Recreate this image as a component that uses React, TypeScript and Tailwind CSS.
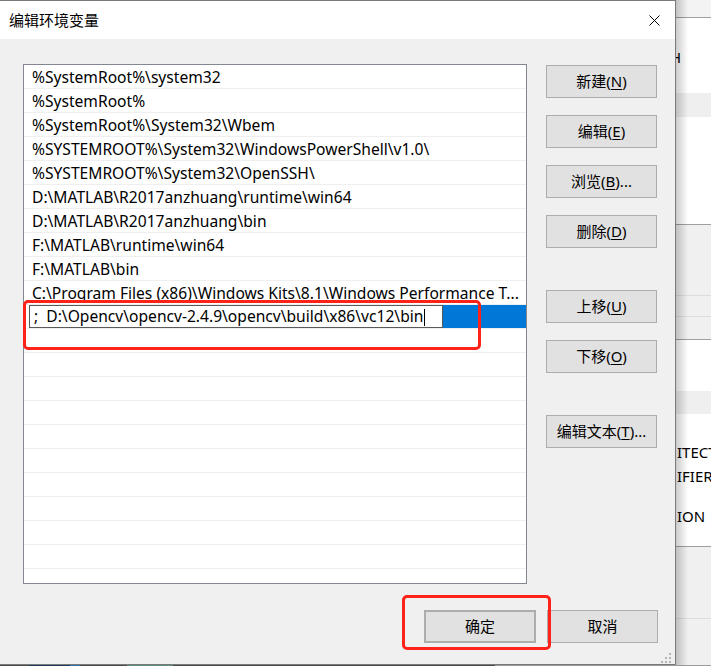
import { ReactNode } from "react";

const font = "font-['Noto_Sans','Noto_Sans_CJK_SC',sans-serif]";

const paths = [
  "%SystemRoot%\\system32",
  "%SystemRoot%",
  "%SystemRoot%\\System32\\Wbem",
  "%SYSTEMROOT%\\System32\\WindowsPowerShell\\v1.0\\",
  "%SYSTEMROOT%\\System32\\OpenSSH\\",
  "D:\\MATLAB\\R2017anzhuang\\runtime\\win64",
  "D:\\MATLAB\\R2017anzhuang\\bin",
  "F:\\MATLAB\\runtime\\win64",
  "F:\\MATLAB\\bin",
  "C:\\Program Files (x86)\\Windows Kits\\8.1\\Windows Performance T...",
];

const editValue = ";  D:\\Opencv\\opencv-2.4.9\\opencv\\build\\x86\\vc12\\bin";

function WinButton({ children, className = "" }: { children: ReactNode; className?: string }) {
  return (
    <div
      className={`flex h-[33px] items-center justify-center border border-[#adadad] bg-[#e1e1e1] text-[15px] text-black ${className}`}
    >
      {children}
    </div>
  );
}

function Key({ k }: { k: string }) {
  return <span className="underline underline-offset-2">{k}</span>;
}

export default function App() {
  const emptyRows = Array.from({ length: 12 });

  return (
    <div className={`relative flex h-[666px] w-[711px] flex-col overflow-hidden bg-[#f0f0f0] ${font}`}>
      <div className="flex h-[665px]">
        {/* Dialog */}
        <div className="relative flex h-[665px] w-[676px] flex-col border-b border-r border-t border-[#7a7a7a] bg-[#f0f0f0]">
          {/* Title bar */}
          <div className="flex h-[38px] items-center justify-between bg-white pl-[9px]">
            <span className="text-[15px] text-black">编辑环境变量</span>
            <svg width="11" height="11" viewBox="0 0 11 11" className="mr-[15px]">
              <path d="M0.5 0.5 L10.5 10.5 M10.5 0.5 L0.5 10.5" stroke="#000" strokeWidth="1" />
            </svg>
          </div>

          {/* Body */}
          <div className="flex flex-1 flex-col pl-[23px] pt-[25px]">
            <div className="flex items-start">
              <div className="h-[520px] w-[504px] overflow-hidden border border-[#828790] bg-white">
                {paths.map((p) => (
                  <div
                    key={p}
                    className="flex h-[24px] items-center overflow-hidden whitespace-nowrap border-b border-[#efefef] pl-[8px] pt-[2px] text-[15.6px] text-black"
                  >
                    {p}
                  </div>
                ))}
                {/* Editing row */}
                <div className="flex h-[24px] border-b border-[#efefef]">
                  <div className="ml-[5px] flex h-[23px] w-[414px] items-center border border-[#5a5a5a] bg-white pl-[4px] pt-[1px] text-[15.6px] text-black">
                    <span className="whitespace-pre">{editValue}</span>
                    <span className="ml-[1px] h-[17px] w-[1px] bg-black" />
                  </div>
                  <div className="h-[23px] flex-1 bg-[#0078d7]" />
                </div>
                {emptyRows.map((_, i) => (
                  <div key={i} className="h-[24px] border-b border-[#efefef]" />
                ))}
              </div>

              <div className="ml-[19px] flex w-[111px] flex-col pt-[1px]">
                <WinButton>
                  新建(<Key k="N" />)
                </WinButton>
                <WinButton className="mt-[17px]">
                  编辑(<Key k="E" />)
                </WinButton>
                <WinButton className="mt-[17px]">
                  浏览(<Key k="B" />)...
                </WinButton>
                <WinButton className="mt-[17px]">
                  删除(<Key k="D" />)
                </WinButton>
                <WinButton className="mt-[42px]">
                  上移(<Key k="U" />)
                </WinButton>
                <WinButton className="mt-[17px]">
                  下移(<Key k="O" />)
                </WinButton>
                <WinButton className="mt-[42px]">
                  编辑文本(<Key k="T" />)...
                </WinButton>
              </div>
            </div>

            {/* Footer */}
            <div className="mt-[26px] flex justify-end gap-[11px] pr-[17px]">
              <WinButton className="w-[112px] border-2 border-[#0078d7]">确定</WinButton>
              <WinButton className="w-[111px]">取消</WinButton>
            </div>
          </div>

          {/* Resize grip */}
          <svg width="12" height="12" viewBox="0 0 12 12" className="absolute left-[660px] top-[651px]">
            {[
              [9, 1],
              [5, 5],
              [9, 5],
              [1, 9],
              [5, 9],
              [9, 9],
            ].map(([x, y]) => (
              <rect key={`${x}-${y}`} x={x} y={y} width="2" height="2" fill="#b5b5b5" />
            ))}
          </svg>
        </div>

        {/* Window behind the dialog */}
        <div className="relative flex w-[35px] flex-col overflow-hidden bg-white text-[15px] text-black">
          <div className="h-[18px] border-b border-[#a0a0a0] bg-[#f3f3f3]" />
          <div className="h-[75px] bg-white pt-[27px]">
            <div className="-ml-[6px] h-[24px] leading-[24px]">H</div>
          </div>
          <div className="h-[24px] bg-[#efefef]" />
          <div className="h-[108px] border-b border-[#a0a0a0] bg-white" />
          <div className="h-[71px] border-b border-[#dcdcdc] bg-[#f0f0f0]" />
          <div className="h-[21px] border-b border-[#dcdcdc] bg-[#f0f0f0]" />
          <div className="h-[23px] border-b border-[#a0a0a0] bg-[#f0f0f0]" />
          <div className="h-[51px] bg-white" />
          <div className="h-[23px] bg-[#efefef]" />
          <div className="h-[133px] border-b border-[#a0a0a0] bg-white pt-[26px] pl-[1px] whitespace-nowrap">
            <div className="h-[24px] leading-[24px]">ITECTURE</div>
            <div className="h-[24px] leading-[24px]">IFIER</div>
            <div className="mt-[16px] h-[24px] leading-[24px]">ION</div>
          </div>
          <div className="h-[72px] border-b border-[#dcdcdc] bg-[#f0f0f0]" />
          <div className="flex-1 bg-[#f0f0f0]" />
          <div className="pointer-events-none absolute inset-y-0 left-0 w-[12px] bg-gradient-to-r from-black/20 to-transparent" />
        </div>
      </div>

      {/* Taskbar edge */}
      <div className="flex h-[1px]">
        <div className="w-[29px] bg-[#4a4a4a]" />
        <div className="w-[41px] bg-[#1f3a5c]" />
        <div className="w-[10px] bg-[#2f6fa8]" />
        <div className="w-[47px] bg-[#4a4a4a]" />
        <div className="w-[46px] bg-[#5f8f80]" />
        <div className="w-[322px] bg-[#4a4a4a]" />
        <div className="flex-1 bg-[#9a9a9a]" />
      </div>

      {/* Red annotations */}
      <div className="pointer-events-none absolute left-[23px] top-[300px] h-[50px] w-[458px] rounded-[5px] border-[3px] border-[#ff2219]" />
      <div className="pointer-events-none absolute left-[402px] top-[595px] h-[55px] w-[149px] rounded-[5px] border-[3px] border-[#ff2219]" />
    </div>
  );
}
